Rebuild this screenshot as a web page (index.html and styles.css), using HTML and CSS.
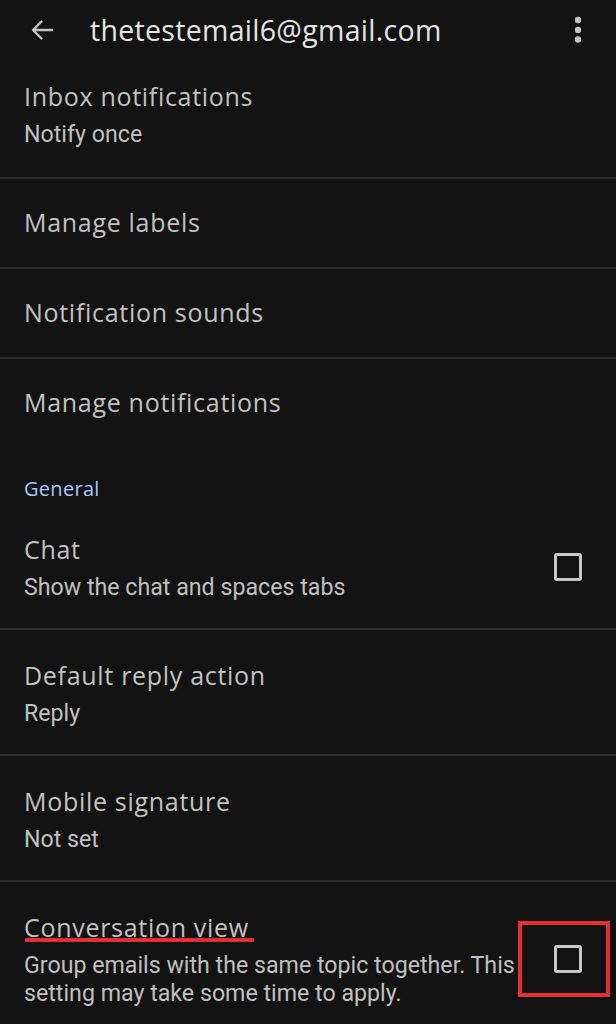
FILE: index.html
```html
<!DOCTYPE html>
<html lang="en">
<head>
<meta charset="utf-8">
<title>Settings</title>
<link rel="stylesheet" href="styles.css">
</head>
<body>
<div class="screen">
  <header class="appbar">
    <span class="back">
      <svg width="24" height="24" viewBox="0 0 24 24"><path d="M22 12H3.5M11.5 3.5L3 12l8.5 8.5" fill="none" stroke="#c4c4c4" stroke-width="2.4" stroke-linecap="round" stroke-linejoin="round"/></svg>
    </span>
    <span class="appbar-title">thetestemail6@gmail.com</span>
    <span class="more">
      <svg width="8" height="28" viewBox="0 0 8 28"><circle cx="4" cy="4" r="3.2" fill="#c4c4c4"/><circle cx="4" cy="14" r="3.2" fill="#c4c4c4"/><circle cx="4" cy="23.5" r="3.2" fill="#c4c4c4"/></svg>
    </span>
  </header>

  <div class="item first">
    <div class="text">
      <div class="title">Inbox notifications</div>
      <div class="sub">Notify once</div>
    </div>
  </div>
  <div class="item single">
    <div class="text"><div class="title">Manage labels</div></div>
  </div>
  <div class="item single">
    <div class="text"><div class="title">Notification sounds</div></div>
  </div>
  <div class="item single">
    <div class="text"><div class="title">Manage notifications</div></div>
  </div>

  <div class="section">General</div>

  <div class="item after-section">
    <div class="text">
      <div class="title">Chat</div>
      <div class="sub">Show the chat and spaces tabs</div>
    </div>
    <div class="trail"><span class="checkbox"></span></div>
  </div>
  <div class="item">
    <div class="text">
      <div class="title">Default reply action</div>
      <div class="sub">Reply</div>
    </div>
  </div>
  <div class="item">
    <div class="text">
      <div class="title">Mobile signature</div>
      <div class="sub">Not set</div>
    </div>
  </div>
  <div class="item">
    <div class="text">
      <div class="title"><span class="marked">Conversation view</span></div>
      <div class="sub">Group emails with the same topic together. This setting may take some time to apply.</div>
    </div>
    <div class="trail"><span class="checkbox"></span><span class="highlight"></span></div>
  </div>
</div>
</body>
</html>
```

FILE: styles.css
```css
html, body {
  margin: 0;
  padding: 0;
  background: #131313;
}
body {
  font-family: Roboto, "Noto Sans", sans-serif;
  color: #c2c2c2;
  width: 616px;
  height: 1024px;
  overflow: hidden;
}
.screen {
  display: flex;
  flex-direction: column;
}
.appbar {
  height: 60px;
  display: flex;
  align-items: center;
  padding: 0 0 0 30px;
}
.back {
  width: 24px;
  height: 24px;
  display: flex;
}
.appbar-title {
  margin-left: 36px;
  font-family: "Open Sans", Roboto, sans-serif;
  font-size: 28.5px;
  letter-spacing: 0.3px;
  color: #e4e4e4;
  flex: 1;
}
.more {
  width: 8px;
  margin-right: 34px;
  display: flex;
  margin-top: -1px;
}
.item {
  display: flex;
  align-items: center;
  border-top: 2px solid #2e2e2e;
  padding: 29px 0 27px 24px;
}
.item.single {
  padding-top: 27px;
  padding-bottom: 29px;
}
.item.first {
  border-top: none;
  padding-top: 20px;
  padding-bottom: 29px;
}
.item.after-section {
  border-top: none;
}
.text {
  flex: 1;
  min-width: 0;
}
.title {
  font-family: "Open Sans", Roboto, sans-serif;
  font-size: 25px;
  letter-spacing: 0.7px;
  line-height: 32px;
  color: #c2c2c2;
}
.sub {
  font-size: 23.2px;
  line-height: 28px;
  margin-top: 8px;
  color: #c0c0c0;
}
.section {
  font-family: "Open Sans", Roboto, sans-serif;
  font-size: 20px;
  letter-spacing: 0.3px;
  line-height: 28px;
  color: #a8c7fa;
  padding: 28px 0 1px 24px;
}
.trail {
  width: 96px;
  flex: none;
  display: flex;
  justify-content: center;
  align-items: center;
  position: relative;
}
.checkbox {
  width: 22px;
  height: 22px;
  border: 3px solid #c8c8c8;
  border-radius: 3px;
}
.marked {
  display: inline-block;
  position: relative;
}
.marked::after {
  content: "";
  position: absolute;
  left: 1px;
  right: -5px;
  bottom: 1px;
  height: 4px;
  background: #e3312f;
}
.highlight {
  position: absolute;
  left: -2px;
  top: 50%;
  margin-top: -38px;
  width: 84px;
  height: 68px;
  border: 4px solid #e3312f;
}
```
